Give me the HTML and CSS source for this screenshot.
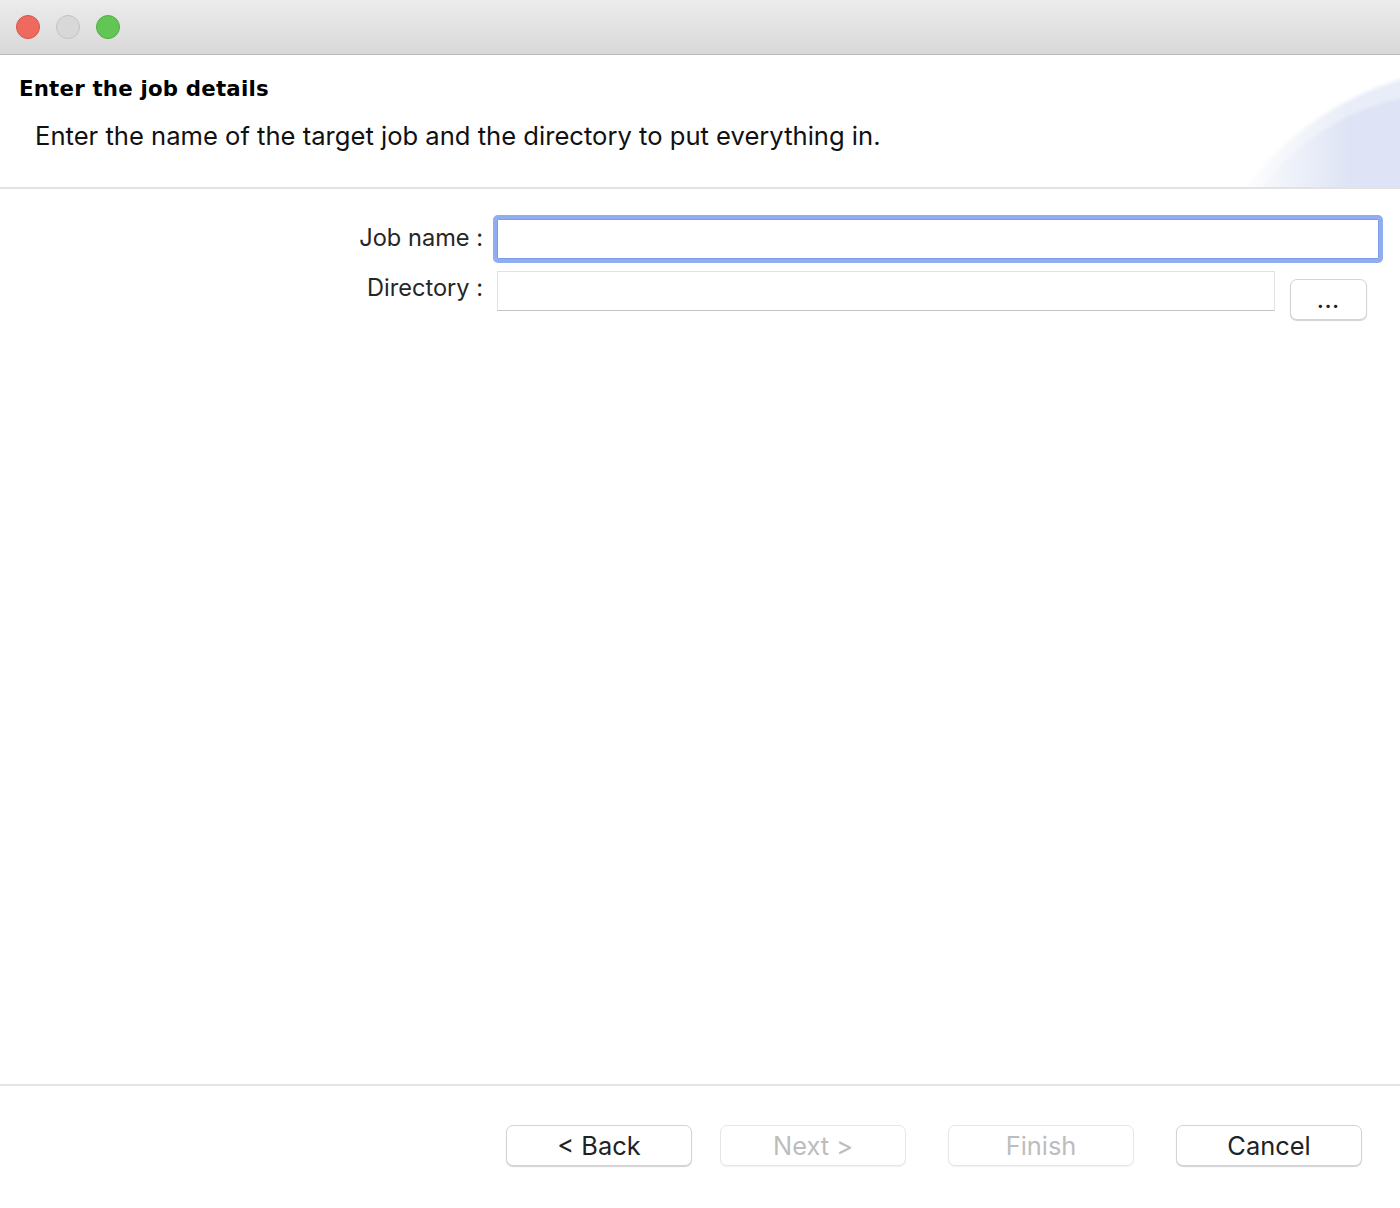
FILE: index.html
```html
<!DOCTYPE html>
<html>
<head>
<meta charset="utf-8">
<link rel="stylesheet" href="styles.css">
</head>
<body>
<div class="window">
  <div class="titlebar">
    <span class="light red"></span>
    <span class="light gray"></span>
    <span class="light green"></span>
  </div>
  <div class="header">
    <div class="title">Enter the job details</div>
    <div class="desc">Enter the name of the target job and the directory to put everything in.</div>
    <div class="deco"></div>
  </div>
  <div class="content">
    <div class="row row-job">
      <label class="label">Job name :</label>
      <div class="input focus"></div>
    </div>
    <div class="row row-dir">
      <label class="label">Directory :</label>
      <div class="input dir"></div>
      <button class="btn small">...</button>
    </div>
  </div>
  <div class="footer">
    <button class="btn wide">&lt; Back</button>
    <button class="btn wide disabled">Next &gt;</button>
    <button class="btn wide disabled gap">Finish</button>
    <button class="btn wide gap">Cancel</button>
  </div>
</div>
</body>
</html>
```
FILE: styles.css
```css
html, body {
  margin: 0;
  padding: 0;
  background: #ffffff;
}
body {
  font-family: Inter, "Liberation Sans", Arial, sans-serif;
  color: #222;
}
.window {
  width: 1400px;
  height: 1208px;
  display: flex;
  flex-direction: column;
  overflow: hidden;
}
.titlebar {
  flex: none;
  background: linear-gradient(#ececec, #d8d8d8);
  border-bottom: 1px solid #b9b9b9;
  display: flex;
  align-items: center;
  padding-left: 16px;
  gap: 16px;
  box-sizing: border-box;
  height: 55px;
}
.light {
  width: 24px;
  height: 24px;
  border-radius: 50%;
  box-sizing: border-box;
}
.red { background: #ee6a5f; border: 1px solid #d5554b; }
.gray { background: #d8d8d8; border: 1px solid #c2c2c2; }
.green { background: #62c655; border: 1px solid #4fae43; }
.header {
  position: relative;
  height: 132px;
  flex: none;
  border-bottom: 2px solid #e2e2e2;
  overflow: hidden;
}
.deco {
  position: absolute;
  right: 0;
  top: 0;
  width: 170px;
  height: 132px;
  background:
    linear-gradient(to right, #ffffff 0%, rgba(255,255,255,0.6) 30%, rgba(255,255,255,0) 70%),
    radial-gradient(circle 238px at 220px 274px, #dee4f5 98%, rgba(222,228,245,0) 100%),
    radial-gradient(ellipse 300px 282px at 262px 290px, #e9edf8 98%, rgba(233,237,248,0) 100%);
}
.title {
  position: relative;
  z-index: 1;
  font-family: "DejaVu Sans", Verdana, sans-serif;
  font-weight: bold;
  font-size: 21.3px;
  letter-spacing: 0.2px;
  color: #000;
  padding: 19px 0 0 19px;
  line-height: 30px;
}
.desc {
  position: relative;
  z-index: 1;
  font-size: 25.6px;
  color: #111;
  padding: 17px 0 0 35px;
  line-height: 30px;
}
.content {
  flex: 1;
  padding-top: 26px;
}
.row {
  display: flex;
  align-items: flex-start;
}
.label {
  width: 484px;
  box-sizing: border-box;
  text-align: right;
  padding-right: 1px;
  font-size: 23.6px;
  color: #262626;
}
.row-job .label {
  line-height: 46px;
}
.input {
  box-sizing: border-box;
  background: #fff;
}
.input.focus {
  margin-left: 9px;
  width: 890px;
  height: 48px;
  border: 4px solid #8fadf0;
  border-radius: 5px;
  box-shadow: inset 0 0 0 1px #7d9ce6;
}
.row-dir {
  margin-top: 8px;
}
.row-dir .label {
  line-height: 34px;
}
.input.dir {
  margin-left: 13px;
  width: 778px;
  height: 40px;
  border: 1px solid #e2e2e2;
  border-bottom: 1px solid #c4c4c4;
}
.btn {
  font-family: Inter, "Liberation Sans", Arial, sans-serif;
  background: #fff;
  border: 1px solid #d4d4d4;
  border-radius: 7px;
  box-shadow: 0 1px 1px rgba(0,0,0,0.18);
  color: #222;
  padding: 0;
  box-sizing: border-box;
}
.btn.small {
  margin-left: 15px;
  margin-top: 8px;
  width: 77px;
  height: 41px;
  font-size: 20px;
  font-weight: bold;
  letter-spacing: 1px;
  line-height: 30px;
  padding-top: 2px;
}
.footer {
  flex: none;
  height: 124px;
  border-top: 2px solid #e4e4e4;
  display: flex;
  align-items: flex-start;
  padding-top: 39px;
  padding-left: 506px;
  box-sizing: border-box;
  gap: 28px;
}
.btn.wide {
  width: 186px;
  height: 41px;
  font-size: 25.4px;
  line-height: 38px;
}
.btn.gap {
  margin-left: 14px;
}
.btn.disabled {
  color: #bdbdbd;
  border-color: #e6e6e6;
  box-shadow: 0 1px 1px rgba(0,0,0,0.06);
}
```
